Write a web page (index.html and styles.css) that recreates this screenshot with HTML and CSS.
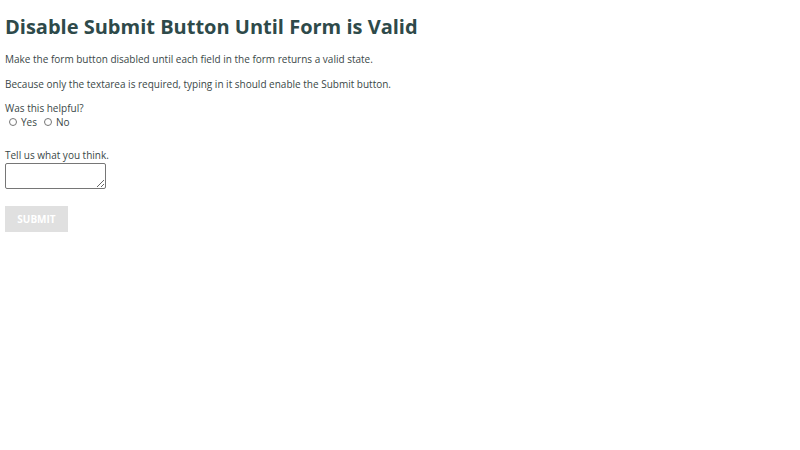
FILE: index.html
```html
<!DOCTYPE html>
<html>
<head>
<meta charset="utf-8">
<link rel="stylesheet" href="styles.css">
</head>
<body>
<h1 class="title">Disable Submit Button Until Form is Valid</h1>
<p class="text">Make the form button disabled until each field in the form returns a valid state.</p>
<p class="text">Because only the textarea is required, typing in it should enable the Submit button.</p>
<form class="form">
  <div class="group">
    <div class="label">Was this helpful?</div>
    <div class="radios">
      <label class="opt"><input type="radio" name="h" class="radio">Yes</label>
      <label class="opt"><input type="radio" name="h" class="radio">No</label>
    </div>
  </div>
  <div class="group2">
    <label class="label" for="t">Tell us what you think.</label>
    <textarea id="t" class="area" required></textarea>
  </div>
  <button type="submit" class="submit" disabled>Submit</button>
</form>
</body>
</html>
```
FILE: styles.css
```css
body {
  margin: 0;
  padding: 0 5px;
  font-family: "Open Sans", sans-serif;
  color: #3a4747;
  font-size: 10px;
  background: #fff;
}
.title {
  margin: 13px 0 0;
  font-size: 20px;
  font-weight: 700;
  color: #2e4a4a;
  line-height: 28px;
}
.text {
  margin: 11px 0 0;
  line-height: 14px;
}
.form {
  margin-top: 10px;
}
.label {
  display: block;
  line-height: 14px;
}
.radios {
  display: flex;
  align-items: center;
}
.opt {
  display: flex;
  align-items: center;
  margin-right: 3px;
  line-height: 14px;
}
.radio {
  width: 8px;
  height: 8px;
  margin: 0 4px 0 4px;
}
.group2 {
  margin-top: 19px;
}
.area {
  display: block;
  width: 101px;
  height: 26px;
  box-sizing: border-box;
  margin: 1px 0 0;
  border: 1px solid #767676;
  border-radius: 2px;
  resize: both;
}
.submit {
  display: block;
  margin-top: 17px;
  width: 63px;
  height: 26px;
  border: none;
  background: #e0e0e0;
  color: #fff;
  font-family: "Open Sans", sans-serif;
  font-weight: 700;
  font-size: 10px;
  text-transform: uppercase;
  padding: 0;
}
```
